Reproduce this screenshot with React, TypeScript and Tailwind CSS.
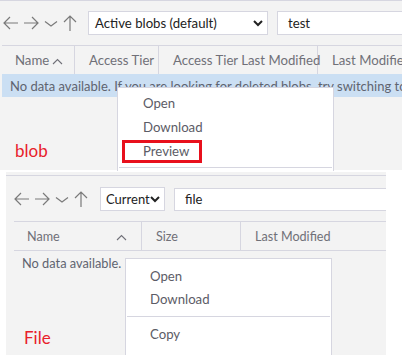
import { ReactNode } from "react";

const font = { fontFamily: '"Segoe UI", Lato, "Liberation Sans", sans-serif' };

const NavIcons = () => (
  <svg width="88" height="24" viewBox="0 0 88 24" fill="none" stroke="#7a7a7a" strokeWidth="1.2" className="shrink-0">
    <path d="M18 12H4M10 6L4 12L10 18" />
    <path d="M24 12H38M32 6L38 12L32 18" />
    <path d="M45 10.5L51 15L57 10.5" />
    <path d="M70 5V20M64 11L70 5L76 11" />
  </svg>
);

const Caret = () => (
  <svg width="10" height="7" viewBox="0 0 10 7" fill="none" stroke="#222" strokeWidth="2" className="shrink-0">
    <path d="M1 1L5 5L9 1" />
  </svg>
);

const MenuItem = ({ children }: { children: ReactNode }) => (
  <div className="h-6 flex items-center pl-[25px] pt-px text-[13.2px] text-[#5c5c66]">{children}</div>
);

export default function App() {
  return (
    <div className="w-[402px] h-[355px] bg-white overflow-hidden flex flex-col" style={font}>
      {/* blob explorer */}
      <div className="h-[170px] shrink-0 bg-[#f3f3f3] border-t border-[#d6d6e0] relative">
        <div className="flex items-center h-6 mt-[10px]">
          <NavIcons />
          <div className="w-[180px] shrink-0 h-6 bg-white border border-[#d6d6e0] flex items-center justify-between pl-[6px] pr-[4px] pt-px text-[13.2px] text-[#222]">
            <span>Active blobs (default)</span>
            <Caret />
          </div>
          <div className="ml-[9px] w-[140px] shrink-0 h-6 bg-white border border-[#d6d6e0] flex items-center pl-[10px] pt-px text-[13.2px] text-[#222]">
            test
          </div>
        </div>

        <div className="mt-[10px] ml-[2px] h-[29px] border-t border-[#d6d6e0] flex text-[13.2px] text-[#707078] whitespace-nowrap">
          <div className="w-[73px] shrink-0 border-r border-[#d6d6e0] flex items-center pl-[13px] pt-[2px] gap-[3px]">
            Name
            <svg width="11" height="7" viewBox="0 0 11 7" fill="none" stroke="#707078" strokeWidth="1.1">
              <path d="M1 6L5.5 1.5L10 6" />
            </svg>
          </div>
          <div className="w-[84px] shrink-0 border-r border-[#d6d6e0] flex items-center pl-[14px] pt-[2px]">Access Tier</div>
          <div className="w-[159px] shrink-0 border-r border-[#d6d6e0] flex items-center pl-[14px] pt-[2px]">Access Tier Last Modified</div>
          <div className="flex items-center pl-[14px] pt-[2px]">Last Modified</div>
        </div>

        <div className="ml-[2px] h-[23px] bg-[#cbdff3] flex items-center pl-2 pt-[3px] text-[13px] text-[#5f6470] whitespace-nowrap">
          No data available. If you are looking for deleted blobs, try switching to the
        </div>

        <div className="mt-[43px] ml-[15px] text-[17px] leading-[22px] text-[#e8202a]">blob</div>

        <div className="absolute left-[117px] top-[86px] w-[217px] h-[84px] bg-white border border-[#d6d6e0] border-b-0 pt-[3px]">
          <MenuItem>Open</MenuItem>
          <MenuItem>Download</MenuItem>
          <MenuItem>Preview</MenuItem>
          <div className="mt-[4px] mx-px border-t border-[#d6d6e0]" />
          <div className="absolute left-[4px] top-[52px] w-[80px] h-[23px] border-[3px] border-[#e8101c]" />
        </div>
      </div>

      {/* file explorer */}
      <div className="mt-[2px] ml-[6px] w-[380px] flex-1 bg-[#f3f3f3] pt-[3px] relative">
        <div className="border-t border-[#d6d6e0]">
          <div className="flex items-center h-6 mt-[11px] ml-[5px]">
            <NavIcons />
            <div className="ml-[1px] w-[65px] shrink-0 h-6 bg-white border border-[#d6d6e0] flex items-center justify-between pl-[5px] pr-[5px] pt-px text-[13px] text-[#222]">
              <span>Current</span>
              <Caret />
            </div>
            <div className="ml-[9px] flex-1 h-[23px] bg-white border border-r-0 border-[#d6d6e0] flex items-center pl-[10px] pt-px text-[13px] text-[#222]">
              file
            </div>
          </div>

          <div className="mt-[10px] ml-[8px] h-[30px] border-y border-[#d6d6e0] flex text-[12.6px] text-[#707078]">
            <div className="w-[128px] shrink-0 border-r border-[#d6d6e0] flex items-center justify-between pl-[13px] pr-[14px] pt-[2px]">
              Name
              <svg width="11" height="7" viewBox="0 0 11 7" fill="none" stroke="#707078" strokeWidth="1.1">
                <path d="M1 6L5.5 1.5L10 6" />
              </svg>
            </div>
            <div className="w-[99px] shrink-0 border-r border-[#d6d6e0] flex items-center pl-[14px] pt-[2px]">Size</div>
            <div className="flex items-center pl-[14px] pt-[2px]">Last Modified</div>
          </div>

          <div className="ml-[16px] mt-[3px] text-[12.8px] leading-[18px] text-[#5f6470]">No data available.</div>

          <div className="mt-[55px] ml-[18px] text-[17px] leading-[22px] text-[#e8202a]">File</div>
        </div>

        <div className="absolute left-[119px] top-[86px] w-[207px] h-[120px] bg-white border border-[#d6d6e0] pt-[6px]">
          <div className="h-[23px] flex items-center pl-[24px] pt-px text-[13.2px] text-[#5c5c66]">Open</div>
          <div className="h-[23px] flex items-center pl-[24px] pt-px text-[13.2px] text-[#5c5c66]">Download</div>
          <div className="mt-[5px] mx-px border-t border-[#d6d6e0]" />
          <div className="mt-[6px] h-[23px] flex items-center pl-[24px] pt-px text-[13.2px] text-[#5c5c66]">Copy</div>
        </div>
      </div>
    </div>
  );
}
